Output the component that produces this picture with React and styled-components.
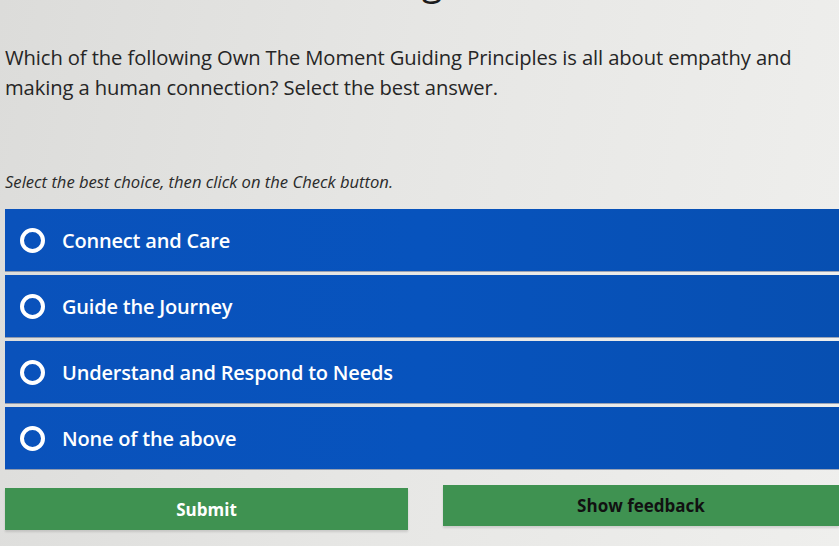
import React from "react";
import styled, { createGlobalStyle } from "styled-components";

const Global = createGlobalStyle`
  html, body { margin: 0; padding: 0; }
  body {
    width: 839px;
    height: 546px;
    overflow: hidden;
    font-family: "Open Sans", "Noto Sans", sans-serif;
    background: linear-gradient(100deg, #dcdcda 0%, #e6e6e4 45%, #efefed 100%);
  }
`;

const Page = styled.div`
  width: 839px;
  height: 546px;
  overflow: hidden;
  display: flex;
  flex-direction: column;
`;

const TitleStrip = styled.div`
  height: 6px;
  overflow: hidden;
  display: flex;
  justify-content: center;
`;

const Title = styled.h1`
  margin: -42px 0 0 0;
  font-size: 38px;
  line-height: 44px;
  font-weight: 400;
  color: #1c1c1c;
  white-space: nowrap;
  padding-left: 10px;
`;

const Question = styled.p`
  margin: 36px 0 0 5px;
  font-size: 20.2px;
  line-height: 30px;
  color: #262626;
  letter-spacing: -0.1px;
`;

const Instruction = styled.p`
  margin: 70px 0 0 5px;
  font-size: 16.6px;
  line-height: 20px;
  font-style: italic;
  color: #2a2a2a;
`;

const Options = styled.div`
  margin: 17px 0 0 5px;
  display: flex;
  flex-direction: column;
  gap: 4px;
`;

const Option = styled.div`
  height: 62px;
  background: linear-gradient(90deg, #0a52bb 0%, #0753bd 50%, #074fb1 100%);
  display: flex;
  align-items: center;
  gap: 17px;
  padding-left: 15px;
  color: #ffffff;
  font-size: 20px;
  font-weight: 600;
  letter-spacing: -0.2px;
  box-shadow: 0 1px 0 rgba(0, 30, 90, 0.35);
`;

const Radio = styled.span`
  width: 17px;
  height: 17px;
  border: 4px solid #ffffff;
  border-radius: 50%;
  flex: none;
`;

const Actions = styled.div`
  margin: 16px 0 0 5px;
  display: grid;
  grid-template-columns: 403px 1fr;
  column-gap: 35px;
  align-items: start;
`;

const Button = styled.button`
  height: ${(p) => p.$h}px;
  margin-top: ${(p) => p.$top}px;
  border: none;
  background: #3f9251;
  color: ${(p) => p.$color};
  font-family: "Open Sans", "Noto Sans", sans-serif;
  font-size: 17px;
  font-weight: 700;
  display: flex;
  align-items: center;
  justify-content: center;
  box-shadow: 0 2px 2px rgba(0, 0, 0, 0.12);
  cursor: pointer;
`;

const options = [
  "Connect and Care",
  "Guide the Journey",
  "Understand and Respond to Needs",
  "None of the above",
];

export default function App() {
  return (
    <Page>
      <Global />
      <TitleStrip>
        <Title>Knowledge Check</Title>
      </TitleStrip>
      <Question>
        Which of the following Own The Moment Guiding Principles is all about empathy and
        <br />
        making a human connection? Select the best answer.
      </Question>
      <Instruction>Select the best choice, then click on the Check button.</Instruction>
      <Options>
        {options.map((o) => (
          <Option key={o}>
            <Radio />
            <span>{o}</span>
          </Option>
        ))}
      </Options>
      <Actions>
        <Button $h={42} $top={3} $color="#ffffff">Submit</Button>
        <Button $h={41} $top={0} $color="#111111">Show feedback</Button>
      </Actions>
    </Page>
  );
}
